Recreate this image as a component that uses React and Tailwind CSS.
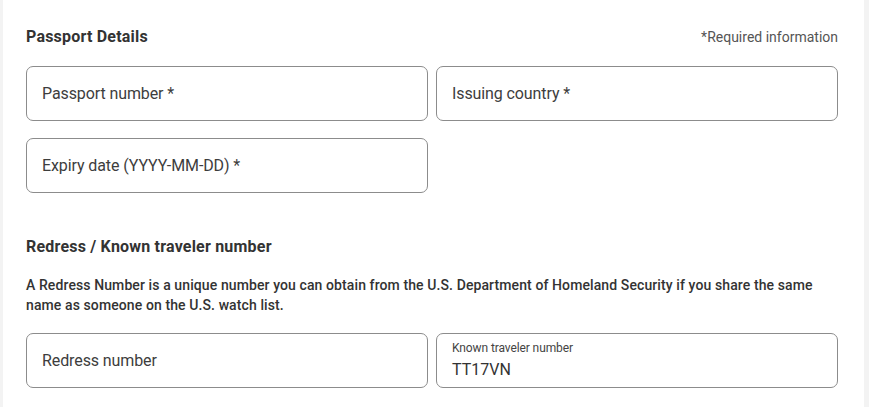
export default function App() {
  const font = { fontFamily: 'Roboto, "Liberation Sans", sans-serif' };
  const box = "h-[55px] rounded-[7px] border border-[#8c8c8c] bg-white flex items-center px-[15px]";
  return (
    <div className="w-[869px] h-[407px] bg-[#f3f3f3] flex overflow-hidden" style={font}>
      <div className="ml-[3px] w-[861px] bg-white pl-[23px] pr-[26px] pt-[27px]">
        <div className="flex items-center justify-between h-[20px]">
          <h2 className="text-[16px] font-bold text-[#333333] tracking-[0.2px]">Passport Details</h2>
          <span className="text-[14px] text-[#555555] tracking-[0px]">*Required information</span>
        </div>
        <div className="mt-[19px] grid grid-cols-2 gap-x-[8px] gap-y-[17px]">
          <div className={box}>
            <span className="text-[16px] text-[#3d3d3d] tracking-[-0.1px]">Passport number *</span>
          </div>
          <div className={box}>
            <span className="text-[16px] text-[#3d3d3d] tracking-[-0.1px]">Issuing country *</span>
          </div>
          <div className={box}>
            <span className="text-[16px] text-[#3d3d3d] tracking-[-0.1px]">Expiry date (YYYY-MM-DD) *</span>
          </div>
        </div>
        <h2 className="mt-[44px] text-[16px] font-bold text-[#333333] tracking-[0.2px] leading-[20px]">Redress / Known traveler number</h2>
        <p className="mt-[18px] text-[14px] font-medium text-[#333333] leading-[20px] tracking-[0.1px]">
          A Redress Number is a unique number you can obtain from the U.S. Department of Homeland Security if you share the same name as someone on the U.S. watch list.
        </p>
        <div className="mt-[18px] grid grid-cols-2 gap-x-[8px]">
          <div className={box}>
            <span className="text-[16px] text-[#3d3d3d] tracking-[-0.1px]">Redress number</span>
          </div>
          <div className="h-[55px] rounded-[7px] border border-[#8c8c8c] bg-white flex flex-col justify-center px-[15px]">
            <span className="text-[12px] leading-[14px] text-[#444444] tracking-[-0.1px] -mt-[2px]">Known traveler number</span>
            <span className="mt-[6px] text-[16px] leading-[18px] text-[#333333]">TT17VN</span>
          </div>
        </div>
      </div>
    </div>
  );
}
